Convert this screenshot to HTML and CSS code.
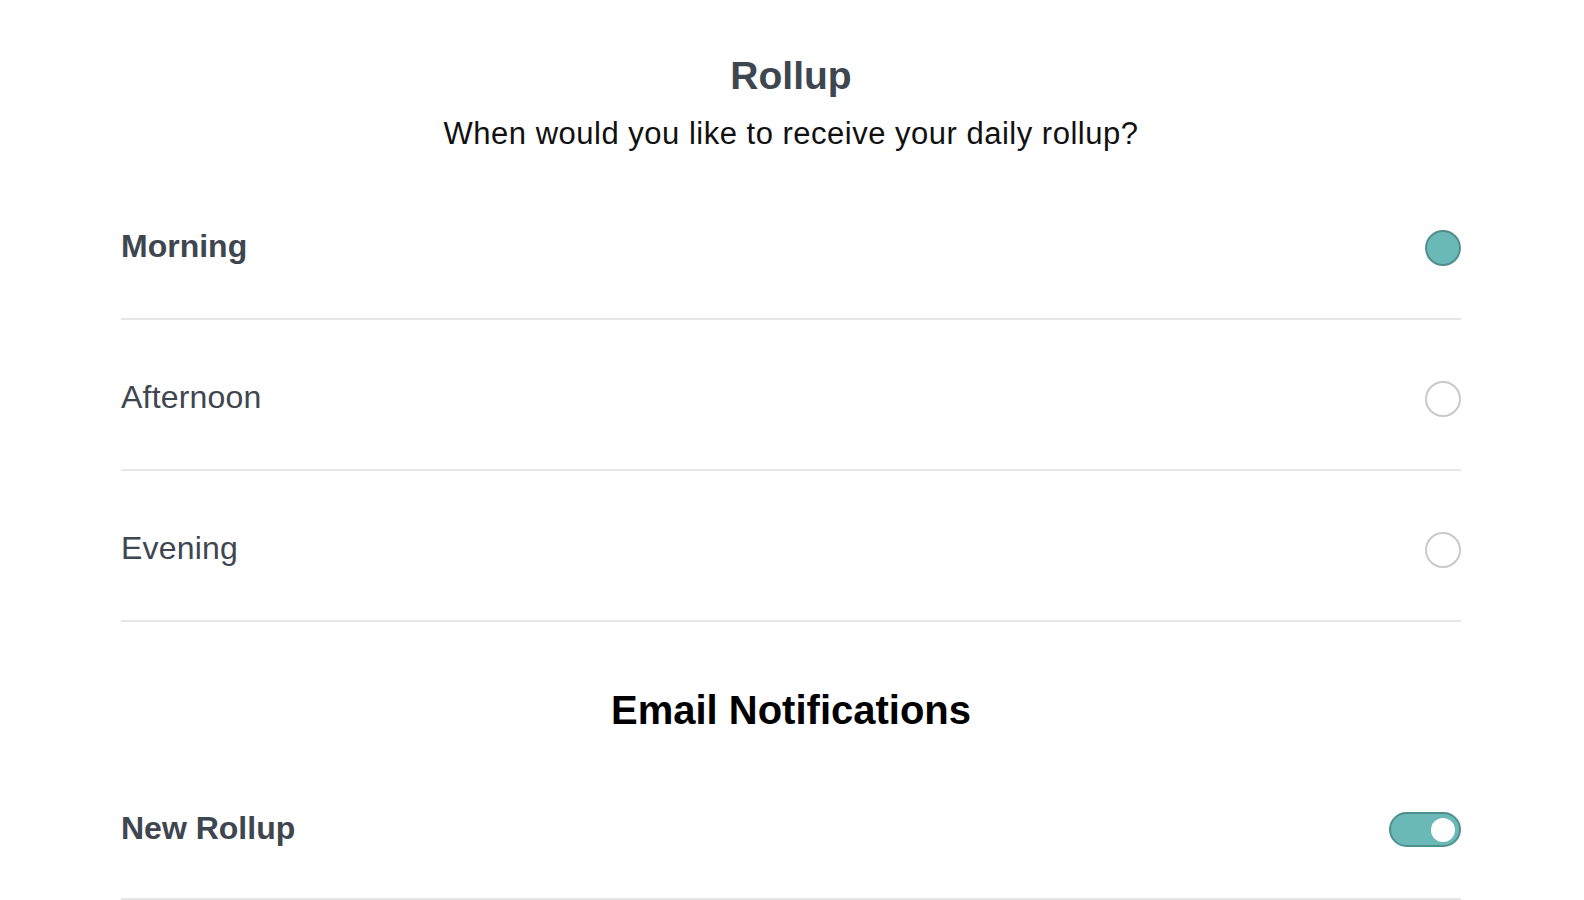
FILE: index.html
```html
<!DOCTYPE html>
<html>
<head>
<meta charset="utf-8">
<link rel="stylesheet" href="styles.css">
</head>
<body>
<div class="page">
  <header class="header">
    <h1 class="title">Rollup</h1>
    <p class="subtitle">When would you like to receive your daily rollup?</p>
  </header>
  <div class="row">
    <span class="label bold">Morning</span>
    <span class="radio checked"></span>
  </div>
  <div class="row">
    <span class="label">Afternoon</span>
    <span class="radio"></span>
  </div>
  <div class="row">
    <span class="label">Evening</span>
    <span class="radio"></span>
  </div>
  <h2 class="section">Email Notifications</h2>
  <div class="row row-switch">
    <span class="label bold">New Rollup</span>
    <span class="toggle on"><span class="knob"></span></span>
  </div>
</div>
</body>
</html>
```

FILE: styles.css
```css
html, body {
  margin: 0;
  padding: 0;
  background: #ffffff;
}
body {
  font-family: "Liberation Sans", Arial, sans-serif;
  color: #3e4650;
}
.page {
  padding: 0 123px 0 121px;
}
.header {
  padding-top: 54px;
  margin-bottom: 18px;
  text-align: center;
}
.title {
  margin: 0;
  font-size: 39px;
  line-height: 44px;
  font-weight: 700;
  color: #3e4650;
}
.subtitle {
  margin: 19px 0 0;
  font-size: 31px;
  line-height: 34px;
  letter-spacing: 0.5px;
  color: #111111;
}
.row {
  box-sizing: border-box;
  height: 151px;
  padding-top: 4px;
  display: flex;
  align-items: center;
  justify-content: space-between;
  border-bottom: 2px solid #e6e6e6;
}
.row-switch {
  padding-top: 8px;
}
.label {
  font-size: 32px;
  line-height: 36px;
  letter-spacing: 0.2px;
  color: #3e4650;
}
.label.bold {
  font-weight: 700;
  letter-spacing: 0;
}
.radio {
  box-sizing: border-box;
  width: 36px;
  height: 36px;
  border-radius: 50%;
  border: 2px solid #c9c9c9;
  margin-top: 5px;
}
.radio.checked {
  background: #6bb9b7;
  border-color: #4f908e;
}
.section {
  margin: 64px 0 15px;
  text-align: center;
  font-size: 40px;
  line-height: 48px;
  font-weight: 700;
  color: #000000;
}
.toggle {
  box-sizing: border-box;
  width: 72px;
  height: 35px;
  border-radius: 18px;
  border: 2px solid #4f908e;
  background: #6bb9b7;
  display: flex;
  align-items: center;
  justify-content: flex-end;
  padding-right: 4px;
  margin-top: 4px;
}
.knob {
  width: 24px;
  height: 24px;
  border-radius: 50%;
  background: #ffffff;
}
```
